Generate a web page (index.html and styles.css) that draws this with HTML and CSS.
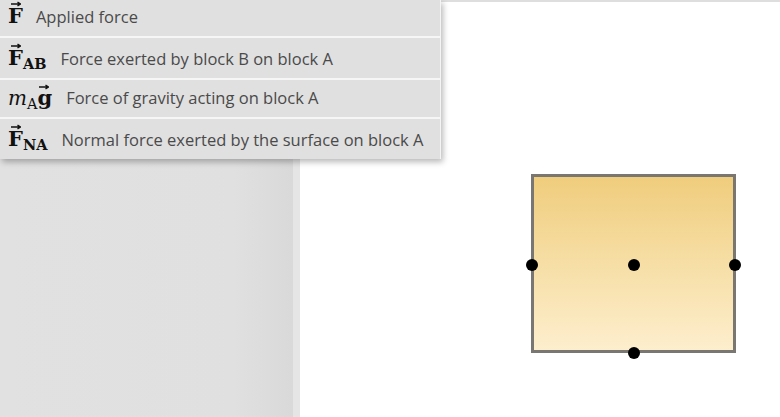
FILE: index.html
```html
<!DOCTYPE html>
<html>
<head>
<meta charset="utf-8">
<link rel="stylesheet" href="styles.css">
</head>
<body>
<div class="app">
  <div class="sidebar"></div>
  <div class="divider"></div>
  <div class="canvas">
    <div class="block">
      <span class="dot dot-left"></span>
      <span class="dot dot-center"></span>
      <span class="dot dot-right"></span>
      <span class="dot dot-bottom"></span>
    </div>
  </div>
  <div class="menu">
    <div class="row row-first">
      <span class="sym sym-f"><span class="vec bold">F<svg class="arrow" viewBox="0 0 10 5"><path d="M0 2.5H8.5M6.5 0.6L9.4 2.5L6.5 4.4" /></svg></span></span>
      <span class="label">Applied force</span>
    </div>
    <div class="row row-2">
      <span class="sym"><span class="vec bold">F<svg class="arrow" viewBox="0 0 10 5"><path d="M0 2.5H8.5M6.5 0.6L9.4 2.5L6.5 4.4" /></svg></span><sub class="bold">AB</sub></span>
      <span class="label">Force exerted by block B on block A</span>
    </div>
    <div class="row row-3">
      <span class="sym"><span class="ital">m</span><sub>A</sub><span class="vec bold g">g<svg class="arrow" viewBox="0 0 10 5"><path d="M0 2.5H8.5M6.5 0.6L9.4 2.5L6.5 4.4" /></svg></span></span>
      <span class="label">Force of gravity acting on block A</span>
    </div>
    <div class="row row-4">
      <span class="sym"><span class="vec bold">F<svg class="arrow" viewBox="0 0 10 5"><path d="M0 2.5H8.5M6.5 0.6L9.4 2.5L6.5 4.4" /></svg></span><sub class="bold">NA</sub></span>
      <span class="label">Normal force exerted by the surface on block A</span>
    </div>
  </div>
</div>
</body>
</html>
```
FILE: styles.css
```css
html, body {
  margin: 0;
  padding: 0;
}
body {
  width: 780px;
  height: 417px;
  overflow: hidden;
  font-family: "Open Sans", "Noto Sans", sans-serif;
}
.app {
  position: relative;
  display: flex;
  height: 417px;
}
.sidebar {
  width: 293px;
  background: linear-gradient(to right, #e1e1e1 0%, #e0e0e0 80%, #d9d9d9 100%);
}
.divider {
  width: 7px;
  background: #e5e5e5;
}
.canvas {
  position: relative;
  flex: 1;
  background: #fff;
  border-top: 2px solid #dedede;
}
.block {
  position: absolute;
  left: 231px;
  top: 172px;
  width: 199px;
  height: 173px;
  border: 3px solid #7a7671;
  background: linear-gradient(to bottom, #f0cd7d 0%, #f6dea5 50%, #fdeecd 100%);
}
.dot {
  position: absolute;
  width: 12px;
  height: 12px;
  border-radius: 50%;
  background: #000;
}
.dot-left { left: -8px; top: 82px; }
.dot-center { left: 94px; top: 82px; }
.dot-right { left: 195px; top: 82px; }
.dot-bottom { left: 94px; top: 170px; }

.menu {
  position: absolute;
  left: 0;
  top: 0;
  width: 440px;
  background: #e0e0e0;
  border-right: 1px solid #f4f4f4;
  box-shadow: 2px 3px 6px rgba(0, 0, 0, 0.28);
}
.row {
  display: flex;
  align-items: center;
  padding-left: 8px;
  border-top: 2px solid #f6f6f6;
  color: #4a4a4a;
}
.row-first {
  height: 36px;
  border-top: none;
  padding-bottom: 4px;
  box-sizing: border-box;
}
.row-2 { height: 40px; }
.row-3 { padding-bottom: 2px; height: 35px; }
.row-4 { height: 40px; }
.label {
  font-size: 16.5px;
  font-weight: 400;
}
.sym {
  font-family: "DejaVu Serif", "Liberation Serif", serif;
  font-size: 21px;
  color: #111;
  margin-right: 14px;
  white-space: nowrap;
  line-height: 1;
}
.sym-f { margin-right: 13px; }
.bold { font-weight: bold; }
.ital { font-style: italic; font-size: 20px; }
.vec {
  position: relative;
  display: inline-block;
}
.arrow {
  position: absolute;
  left: 3px;
  top: -4px;
  width: 10px;
  height: 6px;
  fill: none;
  stroke: #111;
  stroke-width: 1.3;
}
.g .arrow { left: 2px; top: -3px; }
sub {
  font-size: 14.5px;
  vertical-align: -4px;
  line-height: 0;
}
```
